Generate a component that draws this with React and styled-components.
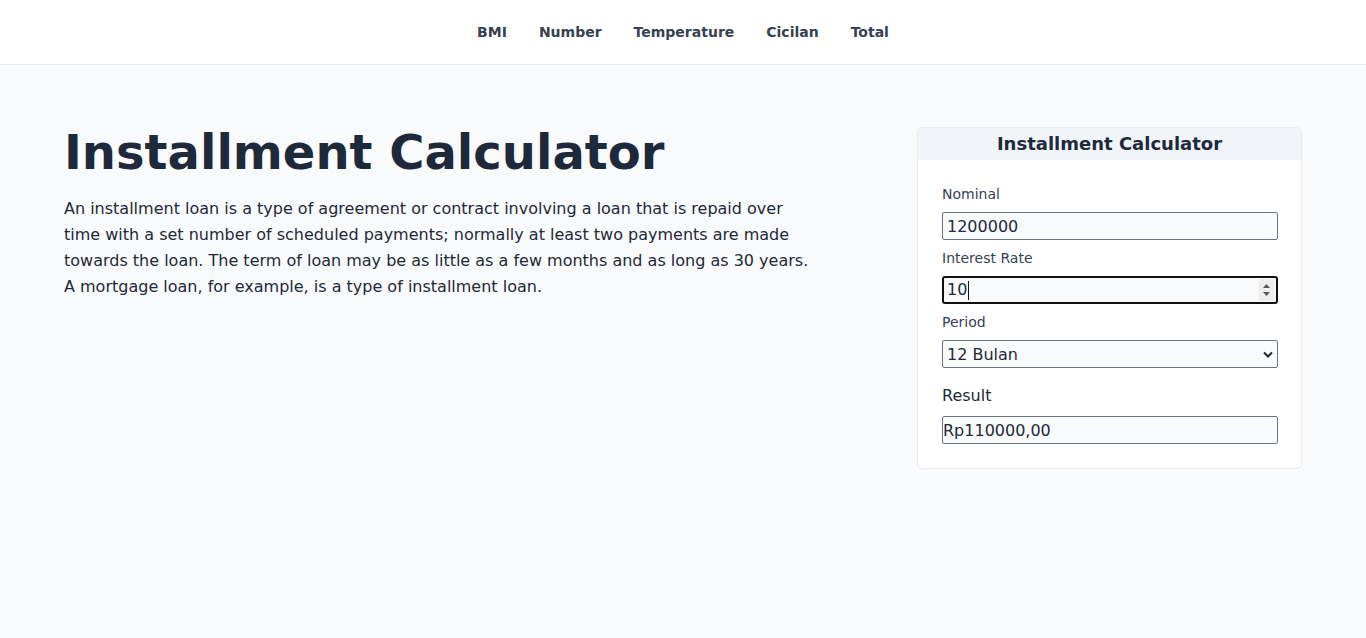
import styled, { createGlobalStyle } from "styled-components";

const GlobalStyle = createGlobalStyle`
  html, body {
    margin: 0;
    padding: 0;
    background: #f9fafb;
    font-family: "DejaVu Sans", "Liberation Sans", sans-serif;
    color: #1f2937;
  }
  * { box-sizing: border-box; }
`;

const NavStyled = styled.nav`
  height: 65px;
  background: #ffffff;
  border-bottom: 1px solid #e5e7eb;
  display: flex;
  justify-content: center;
  align-items: center;
`;
const NavLink = styled.a`
  font-size: 14px;
  font-weight: bold;
  color: #374151;
  text-decoration: none;
  padding: 0 16px;
  cursor: pointer;
`;

const MainStyled = styled.main`
  display: flex;
  justify-content: space-between;
  align-items: flex-start;
  padding: 62px 64px 0 64px;
`;
const InfoStyled = styled.section`
  width: 752px;
`;
const TitleStyled = styled.h1`
  margin: 0;
  font-size: 48px;
  line-height: 50px;
  font-weight: bold;
  color: #1e293b;
`;
const TextStyled = styled.p`
  margin: 19px 0 0 0;
  font-size: 16px;
  line-height: 26px;
  color: #1f2937;
`;

const CardStyled = styled.div`
  width: 385px;
  background: #ffffff;
  border: 1px solid #e9ebef;
  border-radius: 6px;
  overflow: hidden;
  box-shadow: 0 1px 2px rgba(0, 0, 0, 0.03);
`;
const CardHeader = styled.div`
  height: 32px;
  padding-bottom: 2px;
  background: #f1f4f9;
  display: flex;
  align-items: center;
  justify-content: center;
  font-size: 18px;
  font-weight: bold;
  color: #1e293b;
`;
const CardBody = styled.div`
  padding: 24px 24px 24px 24px;
  display: flex;
  flex-direction: column;
`;
const Label = styled.label`
  font-size: ${(p) => (p.$big ? "16px" : "14px")};
  line-height: ${(p) => (p.$big ? "24px" : "20px")};
  color: ${(p) => (p.$big ? "#1f2937" : "#374151")};
  margin-top: ${(p) => p.$top || "0"};
  margin-bottom: 8px;
`;
const Field = styled.div`
  height: 28px;
  width: 336px;
  background: #f9fafb;
  border: ${(p) => (p.$focus ? "2px solid #111111" : "1px solid #6b7280")};
  border-radius: ${(p) => (p.$focus ? "3px" : "2px")};
  display: flex;
  align-items: center;
  padding-left: ${(p) => (p.$focus ? "3px" : p.$flush ? "0" : "4px")};
  font-size: 16px;
  color: #1f2937;
`;
const FieldText = styled.span`
  flex: 1;
`;
const Caret = styled.span`
  display: inline-block;
  width: 1px;
  height: 19px;
  background: #111111;
  vertical-align: middle;
  margin-left: 1px;
`;
const Spinner = styled.div`
  width: 15px;
  height: 22px;
  margin-right: 2px;
  background: #eeeeee;
  display: flex;
  flex-direction: column;
  align-items: center;
  justify-content: center;
  gap: 4px;
`;
const Chevron = styled.svg`
  margin-right: 4px;
`;

const App = () => {
  return (
    <>
      <GlobalStyle />
      <NavStyled>
        <NavLink>BMI</NavLink>
        <NavLink>Number</NavLink>
        <NavLink>Temperature</NavLink>
        <NavLink>Cicilan</NavLink>
        <NavLink>Total</NavLink>
      </NavStyled>
      <MainStyled>
        <InfoStyled>
          <TitleStyled>Installment Calculator</TitleStyled>
          <TextStyled>
            An installment loan is a type of agreement or contract involving a loan that is repaid over time with a set
            number of scheduled payments; normally at least two payments are made towards the loan. The term of loan may
            be as little as a few months and as long as 30 years. A mortgage loan, for example, is a type of installment
            loan.
          </TextStyled>
        </InfoStyled>
        <CardStyled>
          <CardHeader>Installment Calculator</CardHeader>
          <CardBody>
            <Label>Nominal</Label>
            <Field>
              <FieldText>1200000</FieldText>
            </Field>
            <Label $top="8px">Interest Rate</Label>
            <Field $focus>
              <FieldText>
                10
                <Caret />
              </FieldText>
              <Spinner>
                <svg width="7" height="4" viewBox="0 0 7 4">
                  <path d="M0 4 L3.5 0 L7 4 Z" fill="#555" />
                </svg>
                <svg width="7" height="4" viewBox="0 0 7 4">
                  <path d="M0 0 L3.5 4 L7 0 Z" fill="#555" />
                </svg>
              </Spinner>
            </Field>
            <Label $top="8px">Period</Label>
            <Field>
              <FieldText>12 Bulan</FieldText>
              <Chevron width="10" height="7" viewBox="0 0 10 7">
                <path d="M1 1.5 L5 5.5 L9 1.5" fill="none" stroke="#222" strokeWidth="2" />
              </Chevron>
            </Field>
            <Label $big $top="16px">
              Result
            </Label>
            <Field $flush>
              <FieldText>Rp110000,00</FieldText>
            </Field>
          </CardBody>
        </CardStyled>
      </MainStyled>
    </>
  );
};
export default App;
